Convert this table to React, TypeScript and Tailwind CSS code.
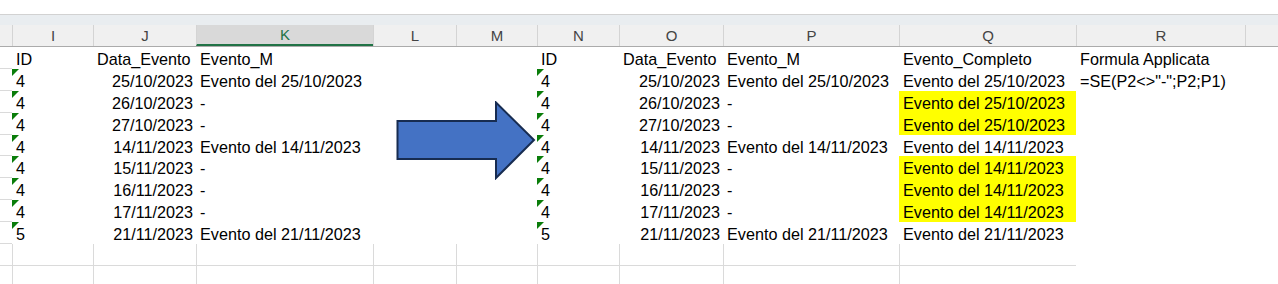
import React from 'react'

type Row = {
  id: string
  date: string
  evento: string
  completo: string
  filled?: boolean
  formula?: string
}

const rows: Row[] = [
  { id: '4', date: '25/10/2023', evento: 'Evento del 25/10/2023', completo: 'Evento del 25/10/2023', formula: '=SE(P2<>"-";P2;P1)' },
  { id: '4', date: '26/10/2023', evento: '-', completo: 'Evento del 25/10/2023', filled: true },
  { id: '4', date: '27/10/2023', evento: '-', completo: 'Evento del 25/10/2023', filled: true },
  { id: '4', date: '14/11/2023', evento: 'Evento del 14/11/2023', completo: 'Evento del 14/11/2023' },
  { id: '4', date: '15/11/2023', evento: '-', completo: 'Evento del 14/11/2023', filled: true },
  { id: '4', date: '16/11/2023', evento: '-', completo: 'Evento del 14/11/2023', filled: true },
  { id: '4', date: '17/11/2023', evento: '-', completo: 'Evento del 14/11/2023', filled: true },
  { id: '5', date: '21/11/2023', evento: 'Evento del 21/11/2023', completo: 'Evento del 21/11/2023' },
]

// column widths, I through S
const cols = [
  { key: 'I', w: 'w-[81px]' },
  { key: 'J', w: 'w-[103px]' },
  { key: 'K', w: 'w-[177px]' },
  { key: 'L', w: 'w-[83px]' },
  { key: 'M', w: 'w-[81px]' },
  { key: 'N', w: 'w-[82px]' },
  { key: 'O', w: 'w-[104px]' },
  { key: 'P', w: 'w-[176px]' },
  { key: 'Q', w: 'w-[177px]' },
  { key: 'R', w: 'w-[169px]' },
  { key: 'S', w: 'flex-1' },
]

// "number stored as text" marker in the cell corner
function Flag() {
  return (
    <span className="absolute left-0 top-0 h-0 w-0 border-t-[7px] border-r-[7px] border-t-[#0a7d0a] border-r-transparent" />
  )
}

function Cell({
  w,
  children,
  right,
  flag,
  yellow,
}: {
  w: string
  children?: React.ReactNode
  right?: boolean
  flag?: boolean
  yellow?: boolean
}) {
  return (
    <div
      className={`relative flex h-full shrink-0 items-center whitespace-nowrap pl-[4px] pr-[3px] pt-[2px] ${w} ${
        right ? 'justify-end' : ''
      } ${yellow ? 'bg-[#ffff00]' : ''}`}
    >
      {flag && <Flag />}
      {children}
    </div>
  )
}

function DataRow({ children }: { children: React.ReactNode }) {
  return (
    <div className="flex h-[21.9px]">
      <div className="h-full w-[12px] shrink-0 border-b border-[#dadada]" />
      {children}
    </div>
  )
}

export default function App() {
  return (
    <div className="relative h-[284px] w-[1278px] overflow-hidden bg-white font-['Liberation_Sans',Arial,sans-serif] text-[16.2px] leading-[18px] text-black">
      <div className="h-[14px] border-b border-[#d2d2d2] box-content" />
      <div className="h-[10px] bg-[#e9edf0]" />

      {/* column letters */}
      <div className="flex h-[22px] border-b border-[#ababab] bg-[#f0f0f0] text-[15px] text-[#444]">
        <div className="w-[12px] shrink-0" />
        {cols.map((c) => (
          <div
            key={c.key}
            className={`flex h-full shrink-0 items-center justify-center border-l border-[#d4d4d4] ${c.w} ${
              c.key === 'K' ? 'border-b-2 border-b-[#217346] bg-[#d9d9d9] text-[#217346]' : ''
            }`}
          >
            {c.key === 'S' ? '' : c.key}
          </div>
        ))}
      </div>

      <DataRow>
        <Cell w="w-[81px]">ID</Cell>
        <Cell w="w-[103px]">Data_Evento</Cell>
        <Cell w="w-[177px]">Evento_M</Cell>
        <Cell w="w-[83px]" />
        <Cell w="w-[81px]" />
        <Cell w="w-[82px]">ID</Cell>
        <Cell w="w-[104px]">Data_Evento</Cell>
        <Cell w="w-[176px]">Evento_M</Cell>
        <Cell w="w-[177px]">Evento_Completo</Cell>
        <Cell w="w-[169px]">Formula Applicata</Cell>
      </DataRow>

      {rows.map((r, i) => (
        <DataRow key={i}>
          <Cell w="w-[81px]" flag>
            {r.id}
          </Cell>
          <Cell w="w-[103px]" right>
            {r.date}
          </Cell>
          <Cell w="w-[177px]">{r.evento}</Cell>
          <Cell w="w-[83px]" />
          <Cell w="w-[81px]" />
          <Cell w="w-[82px]" flag>
            {r.id}
          </Cell>
          <Cell w="w-[104px]" right>
            {r.date}
          </Cell>
          <Cell w="w-[176px]">{r.evento}</Cell>
          <Cell w="w-[177px]" yellow={r.filled}>
            {r.completo}
          </Cell>
          <Cell w="w-[169px]">{r.formula}</Cell>
        </DataRow>
      ))}

      {/* empty rows under the table */}
      {[0, 1].map((n) => (
        <DataRow key={n}>
          {cols.slice(0, 9).map((c) => (
            <div
              key={c.key}
              className={`h-full shrink-0 border-l border-[#dadada] ${c.w} ${n === 0 ? 'border-b' : ''}`}
            />
          ))}
        </DataRow>
      ))}

      {/* block arrow shape */}
      <svg className="absolute left-[396px] top-[101px]" width="140" height="79" viewBox="0 0 140 79">
        <path
          d="M1.5 20 H100 V1.5 L138 39 L100 77 V58 H1.5 Z"
          fill="#4472c4"
          stroke="#172c51"
          strokeWidth="2"
          strokeLinejoin="miter"
        />
      </svg>
    </div>
  )
}
